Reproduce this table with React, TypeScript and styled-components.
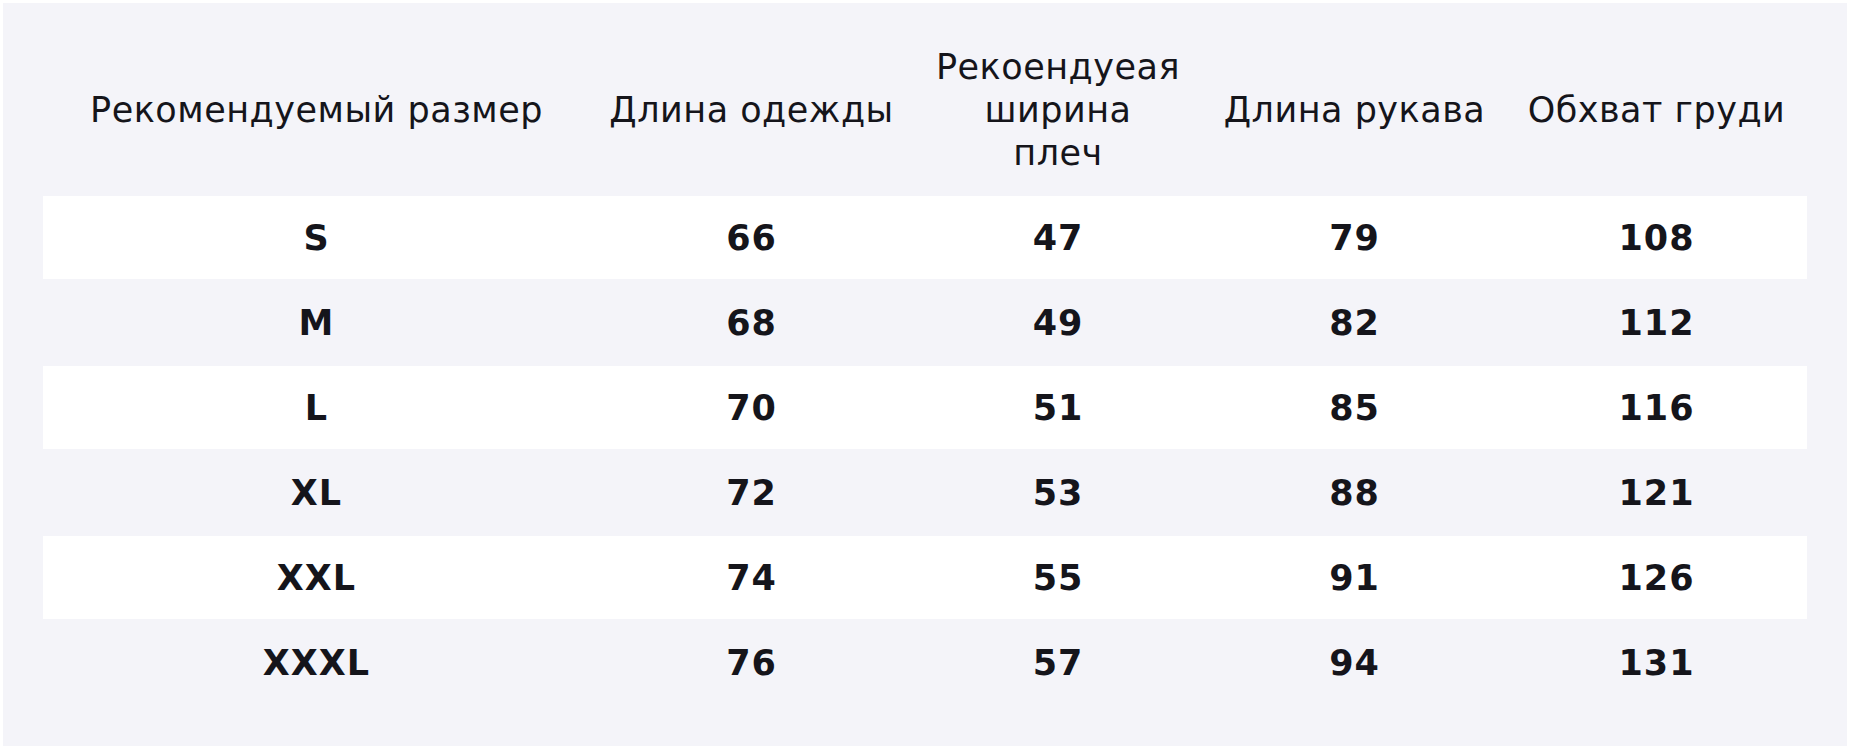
import React from "react";
import styled, { createGlobalStyle } from "styled-components";

const GlobalStyle = createGlobalStyle`
  html, body {
    margin: 0;
    padding: 0;
    background: #ffffff;
  }
  body {
    padding: 3px;
    font-family: "DejaVu Sans", "Liberation Sans", sans-serif;
    color: #15151b;
  }
`;

const Panel = styled.div`
  width: 1844px;
  height: 743px;
  box-sizing: border-box;
  padding: 40px;
  background: #f4f4f9;
`;

const Table = styled.table`
  width: 100%;
  border-collapse: collapse;
  table-layout: fixed;
`;

const HeadCell = styled.th`
  height: 153px;
  box-sizing: border-box;
  padding: 3px 0 21px;
  font-size: 35px;
  font-weight: 400;
  line-height: 43px;
  letter-spacing: 0.5px;
  text-align: center;
  vertical-align: middle;
`;

// white rows come out a little shorter than the grey ones
const Row = styled.tr<{ $white: boolean }>`
  height: ${(p) => (p.$white ? "83px" : "87px")};
  background: ${(p) => (p.$white ? "#ffffff" : "transparent")};
`;

const Cell = styled.td`
  padding: 0;
  font-size: 35px;
  font-weight: 700;
  letter-spacing: 1px;
  text-align: center;
  vertical-align: middle;
`;

const columns = [547, 323, 290, 303, 301];

const headers: string[][] = [
  ["Рекомендуемый размер"],
  ["Длина одежды"],
  ["Рекоендуеая", "ширина", "плеч"],
  ["Длина рукава"],
  ["Обхват груди"],
];

const sizes = [
  ["S", "66", "47", "79", "108"],
  ["M", "68", "49", "82", "112"],
  ["L", "70", "51", "85", "116"],
  ["XL", "72", "53", "88", "121"],
  ["XXL", "74", "55", "91", "126"],
  ["XXXL", "76", "57", "94", "131"],
];

export default function App() {
  return (
    <>
      <GlobalStyle />
      <Panel>
        <Table>
          <colgroup>
            {columns.map((w, i) => (
              <col key={`col-${i}`} style={{ width: w }} />
            ))}
          </colgroup>
          <thead>
            <tr>
              {headers.map((lines, i) => (
                <HeadCell key={`th-${i}`}>
                  {lines.map((line, j) => (
                    <React.Fragment key={`th-${i}-${j}`}>
                      {j > 0 && <br />}
                      {line}
                    </React.Fragment>
                  ))}
                </HeadCell>
              ))}
            </tr>
          </thead>
          <tbody>
            {sizes.map((row, i) => (
              <Row key={`tr-${row[0]}`} $white={i % 2 === 0}>
                {row.map((value, j) => (
                  <Cell key={`td-${row[0]}-${j}`}>{value}</Cell>
                ))}
              </Row>
            ))}
          </tbody>
        </Table>
      </Panel>
    </>
  );
}
